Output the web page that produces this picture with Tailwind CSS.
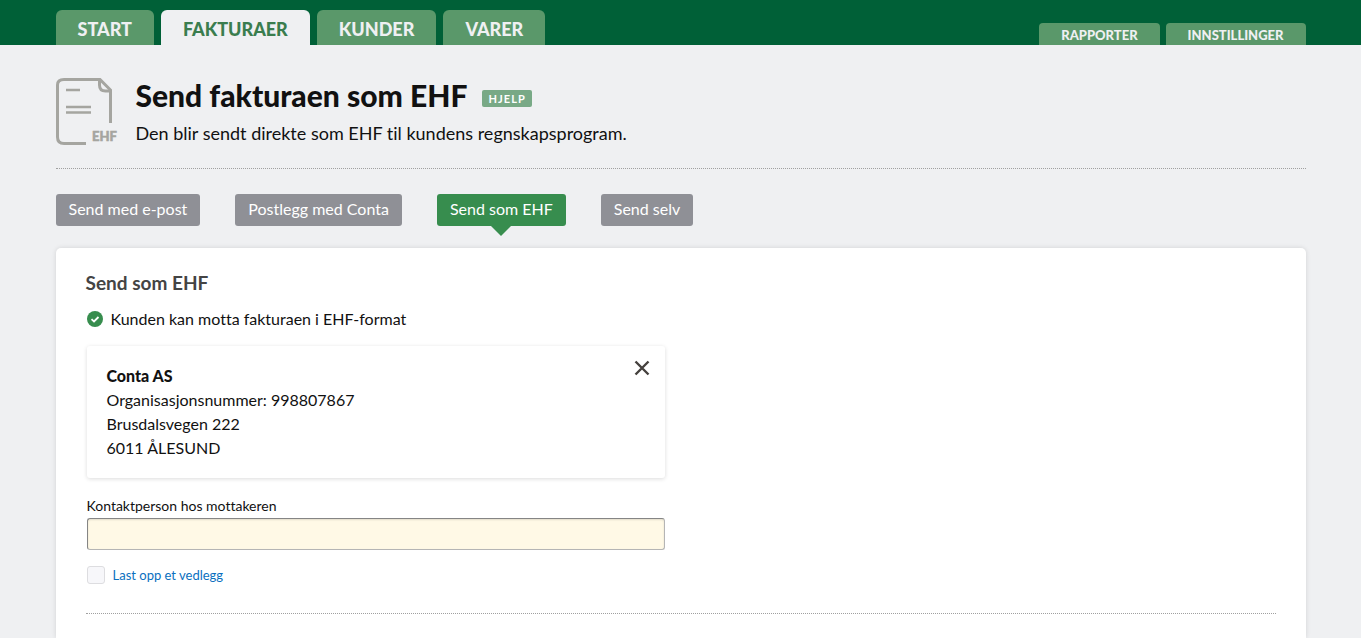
<!DOCTYPE html>
<html lang="no">
<head>
  <meta charset="UTF-8">
  <meta name="viewport" content="width=device-width, initial-scale=1">
  <title>Send fakturaen som EHF</title>
  <script src="https://cdn.jsdelivr.net/npm/@tailwindcss/browser@4"></script>
  <style>
    body { font-family: 'Lato', sans-serif; font-variant-ligatures: none; }
  </style>
</head>
<body class="bg-[#eff0f2] text-[#111] min-h-screen flex flex-col overflow-x-hidden">
  <!-- Navigation -->
  <header class="bg-[#006037] px-6">
    <nav class="max-w-[1250px] mx-auto pt-[10px] flex justify-between items-end">
      <div class="flex gap-[7px] text-lg font-black leading-5">
        <a href="#" class="rounded-t-md bg-[#5a986a] text-[#eff0f2] px-[22px] pt-[9px] pb-[6px]">START</a>
        <a href="#" class="rounded-t-md bg-[#eff0f2] text-[#3a7d4e] px-[22px] pt-[9px] pb-[6px]">FAKTURAER</a>
        <a href="#" class="rounded-t-md bg-[#5a986a] text-[#eff0f2] px-[22px] pt-[9px] pb-[6px]">KUNDER</a>
        <a href="#" class="rounded-t-md bg-[#5a986a] text-[#eff0f2] px-[22px] pt-[9px] pb-[6px]">VARER</a>
      </div>
      <div class="flex gap-[6px] text-[13px] font-black leading-4">
        <a href="#" class="rounded-t-sm bg-[#5a986a] text-[#eff0f2] px-[22px] pt-1 pb-[2px]">RAPPORTER</a>
        <a href="#" class="rounded-t-sm bg-[#5a986a] text-[#eff0f2] px-[22px] pt-1 pb-[2px]">INNSTILLINGER</a>
      </div>
    </nav>
  </header>

  <div class="px-6 grow flex flex-col">
    <main class="w-full max-w-[1250px] mx-auto grow flex flex-col">
      <!-- Page heading -->
      <div class="flex gap-4 pt-8 pb-[21px] border-b border-dotted border-[#a0a0a0]">
        <svg class="w-16 h-[70px] shrink-0" viewBox="0 0 64 70" fill="none" stroke="#a5a5a0" stroke-width="3" aria-hidden="true">
          <path d="M30 66.500H8Q1.500 66.500 1.500 60V8Q1.500 2.500 8 2.500H44L54.500 13V46" />
          <path d="M43.500 2.500V8Q43.500 14 49.500 14H55" />
          <path d="M10 13H24M10 30H35M10 35.500H35" stroke-width="2.500" />
          <text x="36" y="64" fill="#a5a5a0" stroke="#a5a5a0" stroke-width="0.500" font-size="13" font-weight="900">EHF</text>
        </svg>
        <div>
          <div class="flex items-center gap-[15px]">
            <h1 class="text-3xl leading-9 font-black">Send fakturaen som EHF</h1>
            <a href="#" class="mt-[7px] rounded-xs bg-[#78a986] text-white text-[11px] leading-[17px] font-bold tracking-widest px-[6px]">HJELP</a>
          </div>
          <p class="mt-2 text-lg leading-6">Den blir sendt direkte som EHF til kundens regnskapsprogram.</p>
        </div>
      </div>

      <!-- Delivery methods -->
      <div class="flex gap-[35px] mt-[25px] text-base leading-6 text-white">
        <button type="button" class="rounded-[3px] bg-[#8f9096] px-[13px] pt-[3px] pb-[5px]">Send med e-post</button>
        <button type="button" class="rounded-[3px] bg-[#8f9096] px-[13px] pt-[3px] pb-[5px]">Postlegg med Conta</button>
        <button type="button" class="relative rounded-[3px] bg-[#378d4e] px-[13px] pt-[3px] pb-[5px]">
          Send som EHF
          <span class="absolute top-full left-1/2 -translate-x-1/2 border-x-10 border-t-10 border-x-transparent border-t-[#378d4e]"></span>
        </button>
        <button type="button" class="rounded-[3px] bg-[#8f9096] px-[13px] pt-[3px] pb-[5px]">Send selv</button>
      </div>

      <!-- EHF form -->
      <section class="mt-[22px] grow rounded-t-[5px] bg-white shadow-[0_0_5px_rgba(0,0,0,0.12)] px-[30px] pt-[23px] pb-6">
        <h2 class="text-[19px] leading-6 font-bold text-[#444]">Send som EHF</h2>
        <p class="mt-3 flex items-center gap-[7px] text-base leading-6">
          <svg class="w-[18px] h-[18px]" viewBox="0 0 18 18" aria-hidden="true">
            <circle cx="9" cy="9" r="8" fill="#378d4e" />
            <path d="M5.500 9.200L8 11.500L12.500 7" fill="none" stroke="#fff" stroke-width="1.800" />
          </svg>
          Kunden kan motta fakturaen i EHF-format
        </p>

        <div class="mt-[15px] mx-px max-w-[578px] flex justify-between items-start rounded-[3px] shadow-[0_1px_4px_rgba(0,0,0,0.14)] pl-5 pr-[15px] py-[18px]">
          <div class="text-base leading-6">
            <strong class="font-black">Conta AS</strong><br>
            Organisasjonsnummer: 998807867<br>
            Brusdalsvegen 222<br>
            6011 ÅLESUND
          </div>
          <button type="button" aria-label="Fjern" class="-mt-1">
            <svg class="w-4 h-4" viewBox="0 0 16 16" fill="none" stroke="#45413e" stroke-width="2.400">
              <path d="M1.500 1.500L14.500 14.500M14.500 1.500L1.500 14.500" />
            </svg>
          </button>
        </div>

        <div class="max-w-[580px] px-px mt-[18px]">
          <label for="contact" class="block text-sm leading-5">Kontaktperson hos mottakeren</label>
          <input id="contact" type="text" class="mt-[2px] block w-full h-8 rounded-[3px] border border-[#b5b5b5] border-t-[#858585] border-l-[#858585] bg-[#fff9e6] px-2 shadow-[inset_0_1px_2px_rgba(0,0,0,0.12)] focus:outline-none">
          <div class="mt-4 flex items-center gap-2">
            <input id="attachment" type="checkbox" class="appearance-none w-[18px] h-[18px] rounded-[3px] border border-[#dddde0] bg-[#f7f7fa] checked:bg-[#378d4e]">
            <label for="attachment" class="text-[13px] leading-[18px] text-[#0a70c0]">Last opp et vedlegg</label>
          </div>
        </div>

        <hr class="mt-[29px] border-t border-dotted border-[#a0a0a0]">
      </section>
    </main>
  </div>
</body>
</html>
